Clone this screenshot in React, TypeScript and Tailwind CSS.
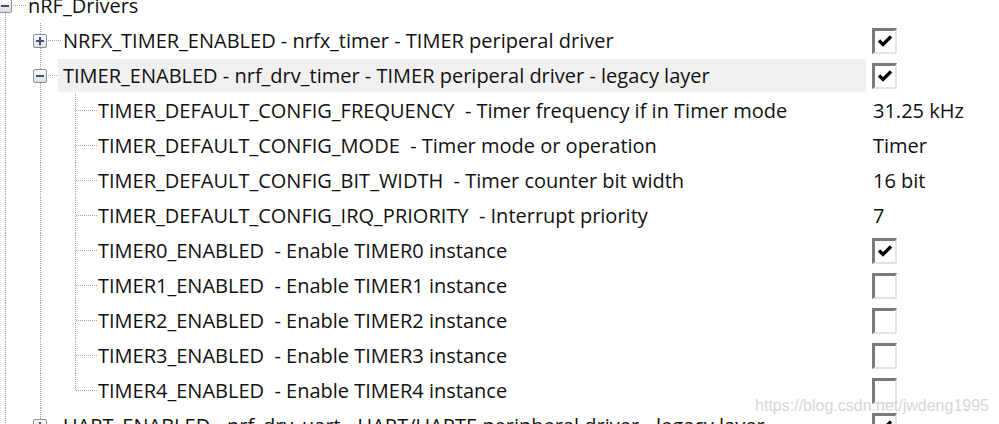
import React from "react";

type CellSpec = { up?: boolean; down?: boolean; right?: boolean; box?: "+" | "-" };

const DOT = "#a3a3a3";

function TreeCell({ c }: { c: CellSpec }) {
  const vTop = c.box ? 11 : 18;
  const vBot = c.box ? 25 : 18;
  return (
    <div className="w-[35px] h-[35px] shrink-0">
      <svg width="35" height="35" style={{ overflow: "visible" }}>
        {c.up && <line x1="17.5" y1="0" x2="17.5" y2={vTop} stroke={DOT} strokeDasharray="1 1" />}
        {c.down && <line x1="17.5" y1={vBot} x2="17.5" y2="35" stroke={DOT} strokeDasharray="1 1" />}
        {c.right && (
          <line x1={c.box ? 25 : 18} y1="17.5" x2="39" y2="17.5" stroke={DOT} strokeDasharray="1 1" />
        )}
        {c.box && (
          <g>
            <defs>
              <linearGradient id="bx" x1="0" y1="0" x2="0" y2="1">
                <stop offset="0" stopColor="#ffffff" />
                <stop offset="1" stopColor="#dcdcdc" />
              </linearGradient>
            </defs>
            <rect x="10.5" y="11.5" width="13" height="13" rx="1.5" fill="url(#bx)" stroke="#8e8f8f" />
            <rect x="13" y="17" width="8" height="2" fill="#3b4f7d" />
            {c.box === "+" && <rect x="16" y="14" width="2" height="8" fill="#3b4f7d" />}
          </g>
        )}
      </svg>
    </div>
  );
}

function Check({ on }: { on: boolean }) {
  return (
    <div className="w-[25px] h-[26px] bg-white border-t-[3px] border-l-[3px] border-r-[2px] border-b-[2px] border-t-[#7a7a7a] border-l-[#7a7a7a] border-r-[#e3e3e3] border-b-[#e3e3e3] flex items-center justify-center">
      {on && (
        <svg width="16" height="12" viewBox="0 0 16 12">
          <path d="M2 5.5 L6 9.5 L14 1.5" stroke="#000" strokeWidth="3.2" fill="none" strokeLinejoin="miter" />
        </svg>
      )}
    </div>
  );
}

type Row = {
  cells: CellSpec[];
  label: string;
  check?: boolean;
  value?: string;
  hl?: boolean;
};

const I: CellSpec = { up: true, down: true };
const T: CellSpec = { up: true, down: true, right: true };
const L: CellSpec = { up: true, right: true };

const rows: Row[] = [
  { cells: [{ up: true, down: true, right: true, box: "-" }], label: "nRF_Drivers" },
  {
    cells: [I, { up: true, down: true, right: true, box: "+" }],
    label: "NRFX_TIMER_ENABLED - nrfx_timer - TIMER periperal driver",
    check: true,
  },
  {
    cells: [I, { up: true, down: true, right: true, box: "-" }],
    label: "TIMER_ENABLED - nrf_drv_timer - TIMER periperal driver - legacy layer",
    check: true,
    hl: true,
  },
  { cells: [I, I, T], label: "TIMER_DEFAULT_CONFIG_FREQUENCY  - Timer frequency if in Timer mode", value: "31.25 kHz" },
  { cells: [I, I, T], label: "TIMER_DEFAULT_CONFIG_MODE  - Timer mode or operation", value: "Timer" },
  { cells: [I, I, T], label: "TIMER_DEFAULT_CONFIG_BIT_WIDTH  - Timer counter bit width", value: "16 bit" },
  { cells: [I, I, T], label: "TIMER_DEFAULT_CONFIG_IRQ_PRIORITY  - Interrupt priority", value: "7" },
  { cells: [I, I, T], label: "TIMER0_ENABLED  - Enable TIMER0 instance", check: true },
  { cells: [I, I, T], label: "TIMER1_ENABLED  - Enable TIMER1 instance", check: false },
  { cells: [I, I, T], label: "TIMER2_ENABLED  - Enable TIMER2 instance", check: false },
  { cells: [I, I, T], label: "TIMER3_ENABLED  - Enable TIMER3 instance", check: false },
  { cells: [I, I, L], label: "TIMER4_ENABLED  - Enable TIMER4 instance", check: false },
  {
    cells: [I, { up: true, down: true, right: true, box: "+" }],
    label: "UART_ENABLED - nrf_drv_uart - UART/UARTE peripheral driver - legacy layer",
    check: true,
  },
];

export default function App() {
  return (
    <div
      className="relative w-[999px] h-[424px] overflow-hidden bg-white text-[#111] text-[20px]"
      style={{ fontFamily: '"Open Sans", "Noto Sans", sans-serif' }}
    >
      <div className="flex flex-col w-[1011px] -ml-[12px] -mt-[12px]">
        {rows.map((r, i) => (
          <div key={i} className="flex h-[35px] items-center">
            {r.cells.map((c, j) => (
              <TreeCell key={j} c={c} />
            ))}
            <div className="flex-1 min-w-0 h-[33px] flex items-center">
              <span
                className={
                  "h-full flex items-center pl-[5px] whitespace-pre flex-1 " + (r.hl ? "bg-[#f0f0f0]" : "")
                }
              >
                {r.label}
              </span>
            </div>
            <div className="w-[133px] shrink-0 flex items-center h-full pl-[6px]">
              {r.value !== undefined ? (
                <span className="pl-[1px] whitespace-pre">{r.value}</span>
              ) : r.check !== undefined ? (
                <Check on={r.check} />
              ) : null}
            </div>
          </div>
        ))}
      </div>
      <div
        className="absolute right-[10px] bottom-[6px] text-[16px] text-[#d6d6d6] whitespace-pre"
        style={{ fontFamily: '"Liberation Sans", Arial, sans-serif' }}
      >
        https://blog.csdn.net/jwdeng1995
      </div>
    </div>
  );
}
